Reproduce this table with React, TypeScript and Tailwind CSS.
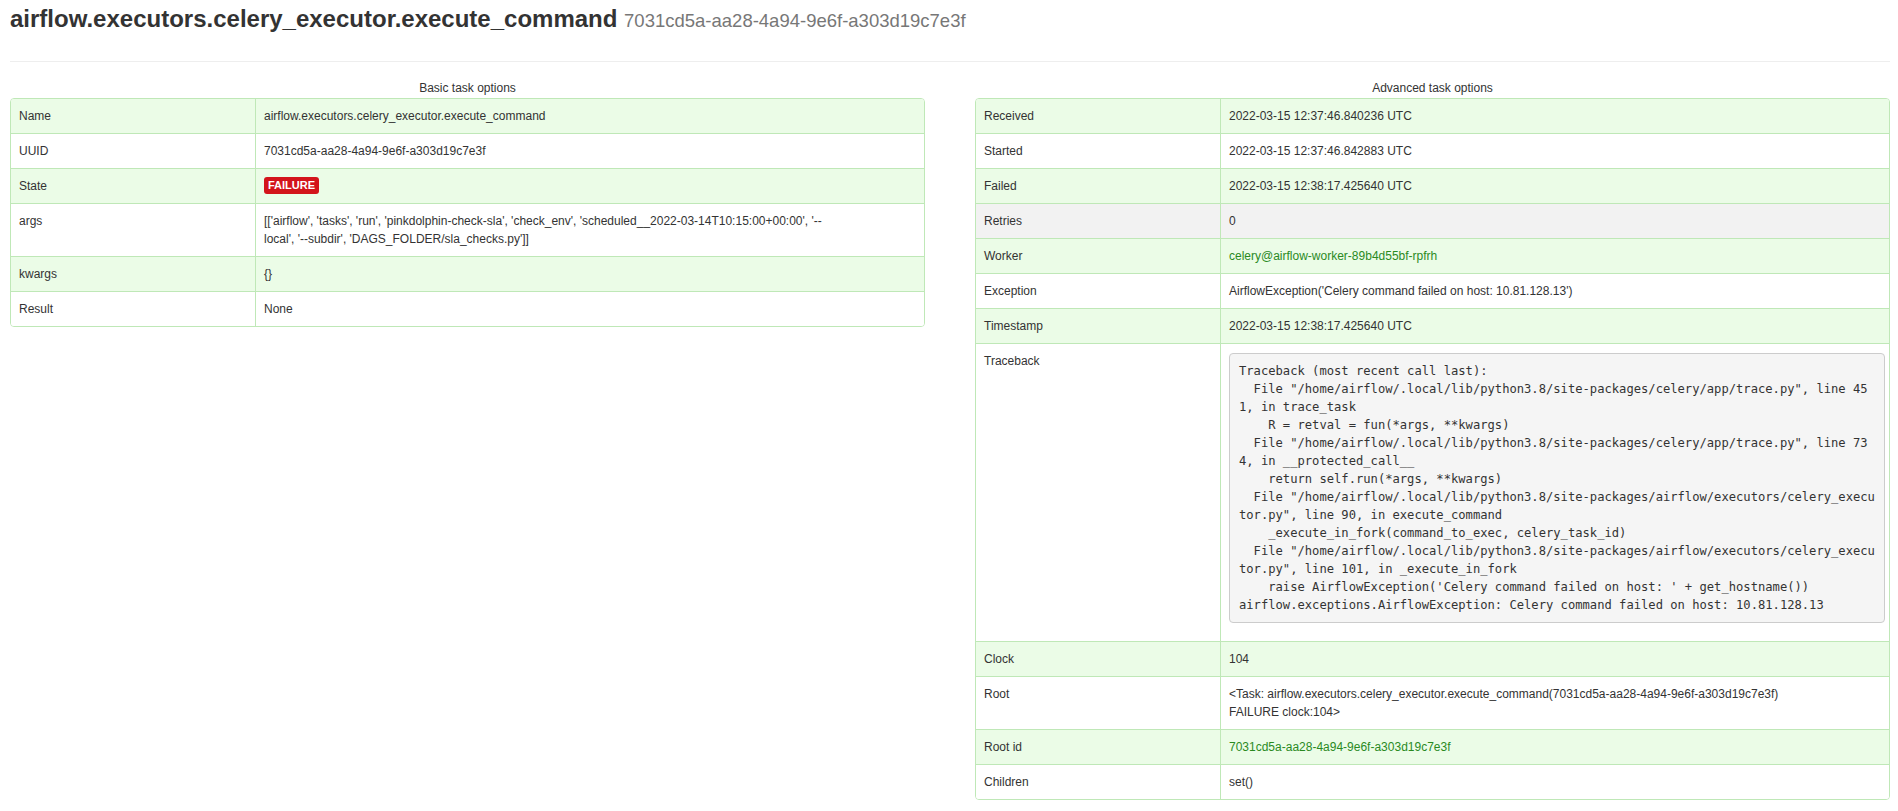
const sans = { fontFamily: '"Liberation Sans", Arial, sans-serif' }

const traceback = `Traceback (most recent call last):
  File "/home/airflow/.local/lib/python3.8/site-packages/celery/app/trace.py", line 45
1, in trace_task
    R = retval = fun(*args, **kwargs)
  File "/home/airflow/.local/lib/python3.8/site-packages/celery/app/trace.py", line 73
4, in __protected_call__
    return self.run(*args, **kwargs)
  File "/home/airflow/.local/lib/python3.8/site-packages/airflow/executors/celery_execu
tor.py", line 90, in execute_command
    _execute_in_fork(command_to_exec, celery_task_id)
  File "/home/airflow/.local/lib/python3.8/site-packages/airflow/executors/celery_execu
tor.py", line 101, in _execute_in_fork
    raise AirflowException('Celery command failed on host: ' + get_hostname())
airflow.exceptions.AirflowException: Celery command failed on host: 10.81.128.13`

type Row = { label: string; value: React.ReactNode; bg: string }

const link = 'text-[#2a8a1f]'

const basicRows: Row[] = [
  { label: 'Name', value: 'airflow.executors.celery_executor.execute_command', bg: 'bg-[#ebfce7]' },
  { label: 'UUID', value: '7031cd5a-aa28-4a94-9e6f-a303d19c7e3f', bg: 'bg-white' },
  {
    label: 'State',
    value: (
      <span className="inline-block rounded-[3px] bg-[#d3141b] px-[4px] py-[2px] align-top text-[11px] font-bold leading-[13px] text-white">
        FAILURE
      </span>
    ),
    bg: 'bg-[#ebfce7]',
  },
  {
    label: 'args',
    value: (
      <>
        [['airflow', 'tasks', 'run', 'pinkdolphin-check-sla', 'check_env', 'scheduled__2022-03-14T10:15:00+00:00', '--
        <br />
        local', '--subdir', 'DAGS_FOLDER/sla_checks.py']]
      </>
    ),
    bg: 'bg-white',
  },
  { label: 'kwargs', value: '{}', bg: 'bg-[#ebfce7]' },
  { label: 'Result', value: 'None', bg: 'bg-white' },
]

const advancedRows: Row[] = [
  { label: 'Received', value: '2022-03-15 12:37:46.840236 UTC', bg: 'bg-[#ebfce7]' },
  { label: 'Started', value: '2022-03-15 12:37:46.842883 UTC', bg: 'bg-white' },
  { label: 'Failed', value: '2022-03-15 12:38:17.425640 UTC', bg: 'bg-[#ebfce7]' },
  { label: 'Retries', value: '0', bg: 'bg-[#f2f2f2]' },
  {
    label: 'Worker',
    value: <a className={link}>celery@airflow-worker-89b4d55bf-rpfrh</a>,
    bg: 'bg-[#ebfce7]',
  },
  {
    label: 'Exception',
    value: "AirflowException('Celery command failed on host: 10.81.128.13')",
    bg: 'bg-white',
  },
  { label: 'Timestamp', value: '2022-03-15 12:38:17.425640 UTC', bg: 'bg-[#ebfce7]' },
  {
    label: 'Traceback',
    value: (
      <pre
        className="mb-[10px] mt-[1px] whitespace-pre rounded-[4px] border border-[#cccccc] bg-[#f5f5f5] px-[9px] py-[8px] text-[12.15px] leading-[18px] text-[#333]"
        style={{ fontFamily: '"DejaVu Sans Mono", monospace' }}
      >
        {traceback}
      </pre>
    ),
    bg: 'bg-white',
  },
  { label: 'Clock', value: '104', bg: 'bg-[#ebfce7]' },
  {
    label: 'Root',
    value: (
      <>
        &lt;Task: airflow.executors.celery_executor.execute_command(7031cd5a-aa28-4a94-9e6f-a303d19c7e3f)
        <br />
        FAILURE clock:104&gt;
      </>
    ),
    bg: 'bg-white',
  },
  {
    label: 'Root id',
    value: <a className={link}>7031cd5a-aa28-4a94-9e6f-a303d19c7e3f</a>,
    bg: 'bg-[#ebfce7]',
  },
  { label: 'Children', value: 'set()', bg: 'bg-white' },
]

function OptionsTable({ caption, rows }: { caption: string; rows: Row[] }) {
  return (
    <div>
      <div className="mb-[1px] text-center text-[12px] leading-[18px] text-[#333]">{caption}</div>
      <div className="overflow-hidden rounded-[4px] border border-[#bfe8b7]">
        {rows.map((row, index) => (
          <div
            key={row.label}
            className={`grid grid-cols-[245px_1fr] ${row.bg} ${index > 0 ? 'border-t border-[#bfe8b7]' : ''}`}
          >
            <div className="border-r border-[#bfe8b7] px-2 py-2 leading-[18px]">{row.label}</div>
            <div className="px-2 py-2 leading-[18px]">{row.value}</div>
          </div>
        ))}
      </div>
    </div>
  )
}

export default function App() {
  return (
    <div className="min-h-screen bg-white pl-[10px] pr-[8px] text-[12px] text-[#333]" style={sans}>
      {/* Header */}
      <h1 className="h-[26px] pt-[0px] mt-[6px] text-[24px] font-bold leading-[26px] text-[#333]">
        airflow.executors.celery_executor.execute_command{' '}
        <small className="text-[18.5px] font-normal leading-none text-[#777]">7031cd5a-aa28-4a94-9e6f-a303d19c7e3f</small>
      </h1>
      <hr className="mt-[29px] border-t border-[#eeeeee]" />

      {/* Options */}
      <div className="mt-[17px] grid grid-cols-2 items-start gap-[50px]">
        <OptionsTable caption="Basic task options" rows={basicRows} />
        <OptionsTable caption="Advanced task options" rows={advancedRows} />
      </div>
    </div>
  )
}
